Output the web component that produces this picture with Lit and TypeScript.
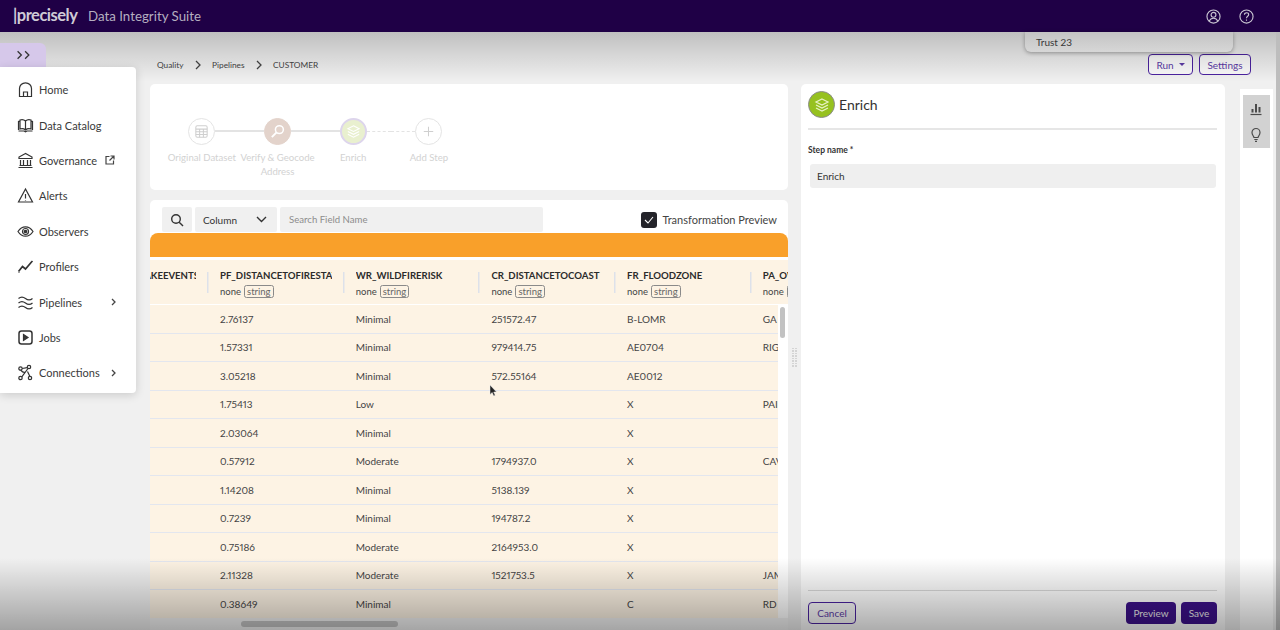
import { LitElement, html, css, svg } from "lit";
import { customElement } from "lit/decorators.js";

const nav = [
  { label: "Home", icon: svg`<path d="M2.500 15.500V7.500C2.500 4.500 5 1.800 8.500 1.800s6 2.700 6 5.700v8zM6.500 15.500v-4.500h4v4.500" />` },
  { label: "Data Catalog", icon: svg`<path d="M1.500 13V4.500L3 4v8c2-.6 4-.3 5.500 1 1.500-1.300 3.500-1.600 5.500-1V4l1.500.5V13M3 12V3c2-.8 4-.4 5.500 1 1.500-1.400 3.500-1.800 5.500-1v9M8.500 4v9.500M1.500 14h5.500l1.500.8 1.500-.8h5.500" />` },
  { label: "Governance", ext: true, icon: svg`<path d="M8.500 1.500L2 5v1.500h13V5zM3.500 8v5M6.500 8v5M10.500 8v5M13.500 8v5M2.500 13.500h12M1.500 15.500h14" />` },
  { label: "Alerts", icon: svg`<path d="M8.500 2L1.500 15h14zM8.500 7v4.500M8.500 13v.6" />` },
  { label: "Observers", icon: svg`<path d="M1 8.500C3 5.300 5.500 3.800 8.500 3.800s5.500 1.500 7.500 4.700c-2 3.200-4.500 4.700-7.500 4.700S3 11.700 1 8.500z" /><circle cx="8.500" cy="8.500" r="3" /><circle cx="8.500" cy="8.500" r="1.200" fill="currentColor" />` },
  { label: "Profilers", icon: svg`<path d="M1.500 13.500L5.500 8.500l3 2.500 6-7M2 14v.5M14.500 4l1-1" stroke-width="1.700" />` },
  { label: "Pipelines", more: true, icon: svg`<path d="M1.500 4.500c2.300-2 4.500-2 7 0s4.700 2 7 0M1.500 9c2.300-2 4.500-2 7 0s4.700 2 7 0M1.500 13.500c2.300-2 4.500-2 7 0s4.700 2 7 0" />` },
  { label: "Jobs", icon: svg`<rect x="2" y="2" width="13" height="13" rx="2.500" stroke-width="1.500" /><path d="M6.500 5.500l4.500 3-4.500 3z" fill="currentColor" />` },
  { label: "Connections", more: true, icon: svg`<circle cx="3.500" cy="4.500" r="1.700" /><circle cx="12" cy="3" r="1.700" /><circle cx="3.500" cy="14" r="1.700" /><circle cx="13" cy="14" r="1.700" /><path d="M5.200 4.500l5-.8M11 4.500L4.800 12.800M10.500 7.500l2.300 4.800M3.700 6.200c1 1.500 2.500 2.300 4.500 2.500" />` },
];

const heads = ["PF_DISTANCETOFIRESTATION", "WR_WILDFIRERISK", "CR_DISTANCETOCOAST", "FR_FLOODZONE", "PA_OWNER"];
const rows = [
  ["2.76137", "Minimal", "251572.47", "B-LOMR", "GA"],
  ["1.57331", "Minimal", "979414.75", "AE0704", "RIG"],
  ["3.05218", "Minimal", "572.55164", "AE0012", ""],
  ["1.75413", "Low", "", "X", "PAI"],
  ["2.03064", "Minimal", "", "X", ""],
  ["0.57912", "Moderate", "1794937.0", "X", "CAV"],
  ["1.14208", "Minimal", "5138.139", "X", ""],
  ["0.7239", "Minimal", "194787.2", "X", ""],
  ["0.75186", "Moderate", "2164953.0", "X", ""],
  ["2.11328", "Moderate", "1521753.5", "X", "JAM"],
  ["0.38649", "Minimal", "", "C", "RD"],
];

const layers = svg`<path d="M9 3l6 3-6 3-6-3z" /><path d="M3 9l6 3 6-3M3 12l6 3 6-3" />`;
const chev = html`<svg class="crumb-chev" viewBox="0 0 6 10"><path d="M1 1l4 4-4 4" /></svg>`;

@customElement("app-root")
export class AppRoot extends LitElement {
  static styles = css`
    :host { display: block; position: relative; width: 1280px; height: 630px; overflow: hidden; background: #f0f0f0; font-family: Lato, "Open Sans", sans-serif; color: #3a3a3a; font-variant-numeric: proportional-nums; }
    * { box-sizing: border-box; }
    .top { height: 32px; background: #1f0046; display: flex; align-items: center; padding: 0 0 0 13px; color: #c9c5d2; }
    .logo { font-size: 16.500px; font-weight: 700; letter-spacing: -0.500px; color: #cfcbd6; margin-top: -3px; width: 75px; }
    .suite { font-size: 13.300px; color: #b5afc0; }
    .top-icons { margin-left: auto; display: flex; gap: 18px; padding-right: 26px; }
    .top-icons svg { width: 15px; height: 15px; fill: none; stroke: #c9c5d2; stroke-width: 1.200; display: block; }
    .crumbs { height: 52px; padding-left: 157px; display: flex; align-items: flex-start; }
    .path { display: flex; align-items: center; font-size: 8.300px; height: 14px; margin-top: 25.500px; color: #444; }
    .crumb-chev { width: 6px; height: 10px; fill: none; stroke: #444; stroke-width: 1.300; margin: 0 11px 0 11.500px; }
    .actions { margin-left: auto; margin-right: 29px; margin-top: 22px; display: flex; gap: 6px; }
    .btn { height: 21px; border: 1.500px solid #4b23a0; border-radius: 4px; color: #5c3aa6; font-size: 10px; display: flex; align-items: center; justify-content: center; gap: 5px; background: #fafafa; }
    .run { width: 45px; }
    .settings { width: 52px; }
    .caret { width: 0; height: 0; border: 3px solid transparent; border-top-color: #5c3aa6; border-bottom: 0; }
    .body { display: flex; height: 546px; padding-left: 150px; }
    .main { width: 638px; display: flex; flex-direction: column; gap: 10px; }
    .steps { height: 106px; background: #fff; border-radius: 5px; display: flex; padding: 33px 0 0 14px; }
    .step { width: 75.700px; display: flex; flex-direction: column; align-items: center; }
    .track { display: flex; align-items: center; width: 100%; height: 28px; }
    .seg { flex: 1; height: 2px; background: #e3e3e3; }
    .seg.none { background: transparent; }
    .seg.dash { height: 0; background: none; border-top: 1.500px dashed #e3e3e3; }
    .dot { width: 27px; height: 27px; border-radius: 50%; display: flex; align-items: center; justify-content: center; flex: none; border: 1.500px solid #e4e4e4; color: #cfcfcf; }
    .dot svg { width: 17px; height: 17px; fill: none; stroke: currentColor; stroke-width: 1.100; }
    .dot.verify { background: #e3d3cb; border-color: #e3d3cb; color: #fff; }
    .dot.verify svg { stroke-width: 1.600; }
    .dot.enrich { background: #e9f0cf; border: 2px solid #ddd5ec; color: #fff; }
    .step-label { font-size: 9.600px; line-height: 14px; color: #d2d2d2; text-align: center; margin-top: 6px; white-space: nowrap; }
    .data { flex: 1; background: #fff; border-radius: 5px 5px 0 0; display: flex; flex-direction: column; overflow: hidden; min-height: 0; }
    .tools { height: 33px; display: flex; padding: 7px 11px 1px 12px; gap: 3px; flex: none; }
    .tool { background: #f0f0f0; border-radius: 2px; display: flex; align-items: center; height: 25px; font-size: 10px; }
    .t-search { width: 30px; justify-content: center; }
    .t-search svg { width: 14px; height: 14px; fill: none; stroke: #333; stroke-width: 1.400; }
    .t-col { width: 82px; padding: 0 10px 0 8px; justify-content: space-between; color: #333; }
    .t-col svg { width: 11px; height: 7px; fill: none; stroke: #333; stroke-width: 1.400; }
    .t-field { width: 263px; padding-left: 9px; color: #8c8c8c; font-size: 9.600px; }
    .preview { margin-left: auto; display: flex; align-items: center; gap: 5px; font-size: 11px; color: #444; height: 25px; }
    .check { width: 16px; height: 16px; border-radius: 3px; background: #24242a; display: flex; align-items: center; justify-content: center; }
    .check svg { width: 10px; height: 8px; fill: none; stroke: #fff; stroke-width: 1.100; }
    .orange { height: 24px; background: #f9a02a; border-radius: 8px 8px 0 0; flex: none; }
    .head { margin-top: 3px; height: 45px; flex: none; background: #fdf3e4; display: grid; grid-template-columns: 57px repeat(4, 135.700px) 1fr; border-bottom: 1px solid #fff; align-items: center; }
    .hcell { height: 33px; padding: 2px 11px 0 13px; display: flex; flex-direction: column; justify-content: center; overflow: hidden; white-space: nowrap; background: linear-gradient(#dde1ea, #dde1ea) left center / 1.500px 21px no-repeat; }
    .hcell:last-child { padding-right: 0; }
    .hcell.first { padding: 0; background: none; justify-content: flex-start; }
    .hclip { width: 46px; display: flex; justify-content: flex-end; overflow: hidden; font-size: 9.600px; font-weight: 700; color: #2b2b2b; line-height: 14px; margin-top: 3px; }
    .hclip span { margin-right: -3px; flex: none; }
    .hname { font-size: 9.600px; font-weight: 700; color: #2b2b2b; line-height: 13px; overflow: hidden; flex: none; }
    .hsub { font-size: 9.500px; line-height: 13px; margin-top: 3px; color: #444; display: flex; align-items: center; gap: 3px; flex: none; }
    .pill { border: 1px solid #8a8a8a; border-radius: 2.500px; padding: 0 2px; font-size: 9.500px; line-height: 11px; color: #666; flex: none; }
    .tbody { flex: 1; min-height: 0; display: flex; flex-direction: column; overflow: hidden; }
    .vwrap { display: flex; flex: 1; min-height: 0; }
    .rows { width: 628px; overflow: hidden; }
    .row { height: 28.500px; display: grid; grid-template-columns: 57px repeat(4, 135.700px) 1fr; align-items: center; background: #fdf3e4; border-bottom: 1.500px solid #e3e6ee; font-size: 10px; color: #444; }
    .row span { padding-left: 13px; overflow: hidden; white-space: nowrap; }
    .vbar { width: 10px; padding: 2px 3px 0 2px; background: #fff; }
    .vthumb { width: 5px; height: 31px; border-radius: 3px; background: #c2c2c2; }
    .hbar { height: 12px; flex: none; padding: 3px 0 0 91px; background: #f4f4f4; }
    .hthumb { width: 157px; height: 6px; border-radius: 3px; background: #c4c4c4; }
    .grip { width: 13px; display: grid; grid-template-columns: 2px 2px; gap: 1px; align-content: center; justify-content: center; }
    .grip i { width: 2px; height: 1.500px; background: #d4d4d4; }
    .panel { width: 424px; background: #fff; border-radius: 5px 5px 0 0; padding: 7px 8px 6px 7px; display: flex; flex-direction: column; }
    .p-title { display: flex; align-items: center; gap: 4px; padding-bottom: 10px; border-bottom: 2px solid #e6e6e6; font-size: 14px; color: #333; box-sizing: content-box; height: 27px; flex: none; }
    .badge { width: 27px; height: 27px; border-radius: 50%; background: #96c11f; border: 1.500px solid #8b8b8b; display: flex; align-items: center; justify-content: center; color: #e9f3c6; }
    .badge svg { width: 18px; height: 18px; fill: none; stroke: currentColor; stroke-width: 1.200; }
    .f-label { font-size: 8.500px; font-weight: 700; margin-top: 13.500px; line-height: 12px; color: #333; }
    .f-input { margin: 8.500px 1px 0 2px; height: 24px; border-radius: 3px; background: #efefef; font-size: 10px; display: flex; align-items: center; padding-left: 7px; color: #333; }
    .p-foot { margin-top: auto; border-top: 1px solid #dadada; padding-top: 11px; display: flex; gap: 5px; }
    .b-cancel { width: 48px; height: 22px; }
    .b-fill { height: 22px; border-radius: 4px; background: #3c1189; color: #eee; font-size: 10px; display: flex; align-items: center; justify-content: center; }
    .b-prev { width: 50px; margin-left: auto; }
    .b-save { width: 36px; }
    .side { width: 33px; margin-left: 15px; margin-top: 5px; background: #fff; padding: 6px 3px; }
    .side-grp { width: 27px; height: 53px; background: #d2d2d2; display: flex; flex-direction: column; align-items: center; gap: 11px; padding-top: 6px; }
    .side-grp svg { width: 14px; height: 15px; fill: none; stroke: #4a4a4a; stroke-width: 1.200; display: block; margin-left: -1px; }
    .edge { position: absolute; right: 0; top: 32px; bottom: 0; width: 4px; background: #bdbdbd; z-index: 6; }
    .trust { position: absolute; left: 1025px; top: 32px; width: 208px; height: 20px; background: #f4f4f4; border-radius: 0 0 6px 6px; box-shadow: 0 1px 4px rgba(0, 0, 0, .35); font-size: 10px; padding: 4px 11px; z-index: 2; color: #444; }
    .expand { position: absolute; left: 0; top: 43px; width: 46px; height: 24px; background: #d6c8ea; border-radius: 0 6px 0 0; z-index: 5; display: flex; align-items: center; justify-content: center; }
    .expand svg { width: 15px; height: 10px; fill: none; stroke: #333; stroke-width: 1.200; }
    .nav { position: absolute; left: 0; top: 67px; width: 136px; height: 326px; background: #fff; border-radius: 0 4px 4px 0; box-shadow: 0 2px 10px rgba(0, 0, 0, .16); z-index: 5; padding: 5px 0 0 17px; }
    .nav-item { height: 35.400px; display: flex; align-items: center; font-size: 11px; color: #3a3a3a; }
    .nav-ic { width: 17px; height: 17px; fill: none; stroke: #333; stroke-width: 1.200; margin-right: 5px; flex: none; }
    .ext { width: 10px; height: 10px; fill: none; stroke: #444; stroke-width: 1.200; margin-left: 8px; }
    .more { width: 5px; height: 8px; fill: none; stroke: #444; stroke-width: 1.300; margin-left: auto; margin-right: 20px; }
    .shade-top { position: absolute; left: 0; right: 0; top: 32px; height: 50px; background: linear-gradient(to bottom, rgba(0, 0, 0, .2), rgba(0, 0, 0, 0)); z-index: 3; pointer-events: none; }
    .shade-bot { position: absolute; left: 0; right: 0; bottom: 0; height: 72px; background: linear-gradient(to bottom, rgba(0, 0, 0, 0), rgba(0, 0, 0, .32)); z-index: 7; pointer-events: none; }
    .cursor { position: absolute; left: 489px; top: 385px; width: 8px; height: 12px; z-index: 8; }
  `;

  render() {
    const grip = Array.from({ length: 16 }, () => html`<i></i>`);
    return html`
      <div class="top">
        <span class="logo">|precisely</span><span class="suite">Data Integrity Suite</span>
        <div class="top-icons">
          <svg viewBox="0 0 16 16"><circle cx="8" cy="8" r="7" /><circle cx="8" cy="6.200" r="2.600" /><path d="M3.300 13c1-2.300 2.600-3.200 4.700-3.200s3.700.9 4.700 3.200" /></svg>
          <svg viewBox="0 0 16 16"><circle cx="8" cy="8" r="7" /><path d="M5.800 6.200c0-1.400 1-2.200 2.300-2.200s2.200.9 2.200 2c0 1.800-2.300 1.800-2.300 3.800M8 11.300v1.100" /></svg>
        </div>
      </div>
      <div class="crumbs">
        <div class="path"><span>Quality</span>${chev}<span>Pipelines</span>${chev}<span>CUSTOMER</span></div>
        <div class="actions">
          <div class="btn run">Run<i class="caret"></i></div>
          <div class="btn settings">Settings</div>
        </div>
      </div>
      <div class="body">
        <div class="main">
          <div class="steps">
            <div class="step">
              <div class="track"><i class="seg none"></i><div class="dot"><svg viewBox="0 0 18 18"><rect x="3" y="3" width="12" height="12" rx="1.500" /><path d="M3 6.500h12M3 9.300h12M3 12.100h12M7 6.500V15M11 6.500V15" /></svg></div><i class="seg"></i></div>
              <div class="step-label">Original Dataset</div>
            </div>
            <div class="step">
              <div class="track"><i class="seg"></i><div class="dot verify"><svg viewBox="0 0 18 18"><circle cx="11" cy="7" r="4.200" /><path d="M8 10l-5 5" stroke-width="2" /></svg></div><i class="seg"></i></div>
              <div class="step-label">Verify &amp; Geocode<br />Address</div>
            </div>
            <div class="step">
              <div class="track"><i class="seg"></i><div class="dot enrich"><svg viewBox="0 0 18 18">${layers}</svg></div><i class="seg dash"></i></div>
              <div class="step-label">Enrich</div>
            </div>
            <div class="step">
              <div class="track"><i class="seg dash"></i><div class="dot"><svg viewBox="0 0 18 18"><path d="M9 4v10M4 9h10" /></svg></div><i class="seg none"></i></div>
              <div class="step-label">Add Step</div>
            </div>
          </div>
          <div class="data">
            <div class="tools">
              <div class="tool t-search"><svg viewBox="0 0 14 14"><circle cx="6" cy="6" r="4.300" /><path d="M9.200 9.200L13 13" /></svg></div>
              <div class="tool t-col">Column<svg viewBox="0 0 11 7"><path d="M1 1l4.500 4.500L10 1" /></svg></div>
              <div class="tool t-field">Search Field Name</div>
              <div class="preview"><div class="check"><svg viewBox="0 0 10 8"><path d="M1 4l3 3 5-6" /></svg></div>Transformation Preview</div>
            </div>
            <div class="orange"></div>
            <div class="head">
              <div class="hcell first"><div class="hclip"><span>EARTHQUAKEEVENTS</span></div></div>
              ${heads.map((h) => html`<div class="hcell"><div class="hname">${h}</div><div class="hsub">none <span class="pill">string</span></div></div>`)}
            </div>
            <div class="tbody">
              <div class="vwrap">
                <div class="rows">
                  ${rows.map((r) => html`<div class="row"><span></span>${r.map((c) => html`<span>${c}</span>`)}</div>`)}
                </div>
                <div class="vbar"><div class="vthumb"></div></div>
              </div>
              <div class="hbar"><div class="hthumb"></div></div>
            </div>
          </div>
        </div>
        <div class="grip">${grip}</div>
        <div class="panel">
          <div class="p-title"><div class="badge"><svg viewBox="0 0 18 18">${layers}</svg></div>Enrich</div>
          <div class="f-label">Step name *</div>
          <div class="f-input">Enrich</div>
          <div class="p-foot">
            <div class="btn b-cancel">Cancel</div>
            <div class="b-fill b-prev">Preview</div>
            <div class="b-fill b-save">Save</div>
          </div>
        </div>
        <div class="side">
          <div class="side-grp">
            <svg viewBox="0 0 14 15"><path d="M1.500 13.500h11" /><path d="M3.500 8v3.500M7 3v8.500M10.500 6v5.500" stroke-width="2" /></svg>
            <svg viewBox="0 0 14 15"><path d="M5 10.500C4.600 8.800 3 8 3 5.500a4 4 0 0 1 8 0c0 2.500-1.600 3.300-2 5zM5.300 12.500h3.400M6 14.300h2" /></svg>
          </div>
        </div>
      </div>
      <div class="trust">Trust 23</div>
      <div class="expand"><svg viewBox="0 0 14 9"><path d="M1.500 1l3.500 3.500L1.500 8M8.500 1L12 4.500 8.500 8" /></svg></div>
      <div class="nav">
        ${nav.map((n) => html`<div class="nav-item">
          <svg class="nav-ic" viewBox="0 0 17 17">${n.icon}</svg>${n.label}
          ${n.ext ? html`<svg class="ext" viewBox="0 0 10 10"><path d="M4.500 1.500H1v7.500h7.500V5.500M5.500 1h3.500v3.500M9 1L4.500 5.500" /></svg>` : ""}
          ${n.more ? html`<svg class="more" viewBox="0 0 5 8"><path d="M1 1l3 3-3 3" /></svg>` : ""}
        </div>`)}
      </div>
      <div class="edge"></div>
      <div class="shade-top"></div>
      <div class="shade-bot"></div>
      <svg class="cursor" viewBox="0 0 8 12"><path d="M1 0v9.500l2.200-2 1.500 3.500 1.500-.7-1.500-3.300H7.500z" fill="#222" stroke="#eee" stroke-width=".5" /></svg>
    `;
  }
}
